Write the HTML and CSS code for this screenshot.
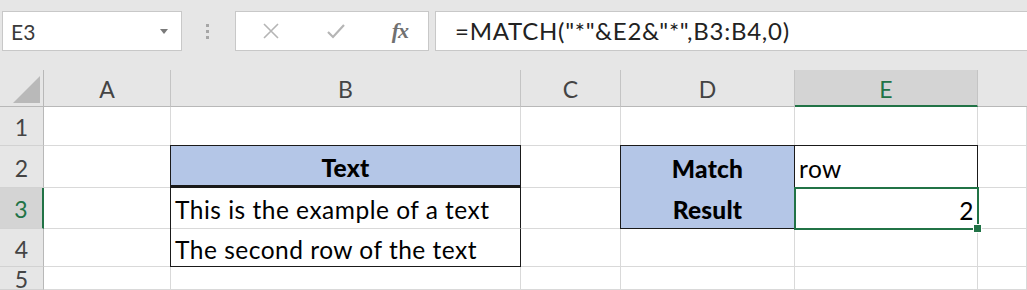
FILE: index.html
```html
<!DOCTYPE html>
<html lang="en">
<head>
    <meta charset="UTF-8">
    <title>MATCH wildcard</title>
    <link rel="stylesheet" href="styles.css">
</head>
<body>
<div class="toolbar">
    <div class="namebox">
        <span>E3</span>
        <svg class="caret" width="8" height="5" viewBox="0 0 8 5"><path d="M0 0h8L4 5z" fill="#7a7a7a"/></svg>
    </div>
    <div class="grip"><i></i><i></i><i></i></div>
    <div class="buttons">
        <svg width="18" height="18" viewBox="0 0 18 18"><path d="M2 2L16 16M16 2L2 16" stroke="#b5b5b5" stroke-width="1.6" fill="none"/></svg>
        <svg width="20" height="18" viewBox="0 0 20 18"><path d="M2 10L7 15L18 3" stroke="#b5b5b5" stroke-width="2.2" fill="none"/></svg>
        <span class="fx">fx</span>
    </div>
    <div class="formula">=MATCH("*"&amp;E2&amp;"*",B3:B4,0)</div>
</div>

<div class="sheet">
    <!-- header row -->
    <div class="hdr corner"><span class="tri"></span></div>
    <div class="hdr col">A</div>
    <div class="hdr col">B</div>
    <div class="hdr col">C</div>
    <div class="hdr col">D</div>
    <div class="hdr col active">E</div>
    <div class="hdr col last"></div>

    <!-- row 1 -->
    <div class="hdr row">1</div>
    <div class="cell"></div><div class="cell"></div><div class="cell"></div>
    <div class="cell"></div><div class="cell"></div><div class="cell"></div>

    <!-- row 2 -->
    <div class="hdr row">2</div>
    <div class="cell"></div>
    <div class="cell fill bold center b-head">Text</div>
    <div class="cell"></div>
    <div class="cell fill bold center b-label-top">Match</div>
    <div class="cell b-input">row</div>
    <div class="cell"></div>

    <!-- row 3 -->
    <div class="hdr row active">3</div>
    <div class="cell"></div>
    <div class="cell b-list">This is the example of a text</div>
    <div class="cell"></div>
    <div class="cell fill bold center b-label-bottom">Result</div>
    <div class="cell right selected">2<span class="handle"></span></div>
    <div class="cell"></div>

    <!-- row 4 -->
    <div class="hdr row">4</div>
    <div class="cell"></div>
    <div class="cell b-list b-list-end">The second row of the text</div>
    <div class="cell"></div><div class="cell"></div><div class="cell"></div><div class="cell"></div>

    <!-- row 5 -->
    <div class="hdr row">5</div>
    <div class="cell"></div><div class="cell"></div><div class="cell"></div>
    <div class="cell"></div><div class="cell"></div><div class="cell"></div>
</div>
</body>
</html>
```

FILE: styles.css
```css
body {
    margin: 0;
    height: 290px;
    background: #e6e6e6;
    font-family: Lato, "Liberation Sans", sans-serif;
    overflow: hidden;
}

.toolbar {
    display: flex;
    align-items: center;
    height: 70px;
    padding: 0 0 8px 2px;
    box-sizing: border-box;
}
.namebox {
    display: flex;
    align-items: center;
    justify-content: space-between;
    width: 180px;
    height: 40px;
    box-sizing: border-box;
    background: #fff;
    border: 1px solid #c8c8c8;
    padding: 0 13px 0 8px;
    font-size: 21px;
    color: #3a3a3a;
}
.grip {
    display: flex;
    flex-direction: column;
    gap: 3px;
    margin: 0 26px 0 24px;
}
.grip i {
    width: 3px;
    height: 3px;
    background: #a6a6a6;
}
.buttons {
    display: flex;
    align-items: center;
    justify-content: space-between;
    width: 194px;
    height: 40px;
    box-sizing: border-box;
    background: #fff;
    border: 1px solid #c8c8c8;
    padding: 0 20px 0 26px;
}
.fx {
    font-family: "Liberation Serif", serif;
    font-style: italic;
    font-weight: bold;
    font-size: 22px;
    color: #707070;
    letter-spacing: -1px;
}
.formula {
    flex: 1;
    height: 40px;
    margin-left: 6px;
    box-sizing: border-box;
    background: #fff;
    border: 1px solid #c8c8c8;
    border-right: none;
    padding-left: 19px;
    font-size: 24px;
    letter-spacing: 0.75px;
    line-height: 38px;
    color: #222;
}

.sheet {
    display: grid;
    grid-template-columns: 44px 127px 350px 100px 174px 183px 1fr;
    grid-template-rows: 37px 39px 42px 41px 38px 23px;
    background: #fff;
}
.hdr {
    background: #e6e6e6;
    color: #444;
    font-size: 23px;
    display: flex;
    align-items: center;
    justify-content: center;
    box-sizing: border-box;
}
.hdr.col {
    border-right: 1px solid #c4c4c4;
    border-bottom: 1px solid #b8b8b8;
    padding-top: 2px;
}
.hdr.col.last {
    border-right: none;
}
.hdr.row {
    border-right: 1px solid #b8b8b8;
    border-bottom: 1px solid #d2d2d2;
    padding-top: 2px;
}
.hdr.active {
    background: #d4d4d4;
    color: #217346;
}
.hdr.col.active {
    border-bottom: 2px solid #217346;
}
.hdr.row.active {
    border-right: 2px solid #217346;
}
.corner {
    border-right: 1px solid #b8b8b8;
    border-bottom: 1px solid #b8b8b8;
    align-items: flex-end;
    justify-content: flex-end;
    padding: 0 3px 3px 0;
}
.tri {
    width: 0;
    height: 0;
    border-left: 27px solid transparent;
    border-bottom: 27px solid #b9b9b9;
}

.cell {
    border-right: 1px solid #d9d9d9;
    border-bottom: 1px solid #d9d9d9;
    box-sizing: border-box;
    font-size: 24.5px;
    letter-spacing: 0.5px;
    color: #000;
    padding: 3px 4px 0 4px;
    display: flex;
    align-items: center;
    white-space: nowrap;
}
.cell.fill {
    background: #b4c6e7;
}
.cell.bold {
    font-weight: 900;
    letter-spacing: 0.2px;
}
.cell.center {
    justify-content: center;
}
.cell.right {
    justify-content: flex-end;
}

/* outlined ranges: right/bottom via border, left/top via shadow over the neighbour's gridline */
.b-head {
    border-right-color: #1a1a1a;
    border-bottom: 3px solid #1a1a1a;
    box-shadow: -1px 0 0 #1a1a1a, 0 -1px 0 #1a1a1a, -1px -1px 0 #1a1a1a;
}
.b-list {
    border-right-color: #1a1a1a;
    box-shadow: -1px 0 0 #1a1a1a;
}
.b-list-end {
    border-bottom-color: #1a1a1a;
}
.b-label-top {
    border-right-color: #1a1a1a;
    border-bottom-color: #b4c6e7;
    box-shadow: -1px 0 0 #1a1a1a, 0 -1px 0 #1a1a1a, -1px -1px 0 #1a1a1a;
}
.b-label-bottom {
    border-right-color: #1a1a1a;
    border-bottom-color: #1a1a1a;
    box-shadow: -1px 0 0 #1a1a1a;
}
.b-input {
    border-right-color: #1a1a1a;
    border-bottom-color: #1a1a1a;
    box-shadow: 0 -1px 0 #1a1a1a;
}
.selected {
    position: relative;
    z-index: 1;
    border: 1px solid #217346;
    box-shadow: 0 0 0 1px #217346;
    padding-right: 3px;
}
.handle {
    position: absolute;
    right: -5px;
    bottom: -5px;
    width: 7px;
    height: 7px;
    background: #217346;
    border: 1px solid #fff;
}
```
